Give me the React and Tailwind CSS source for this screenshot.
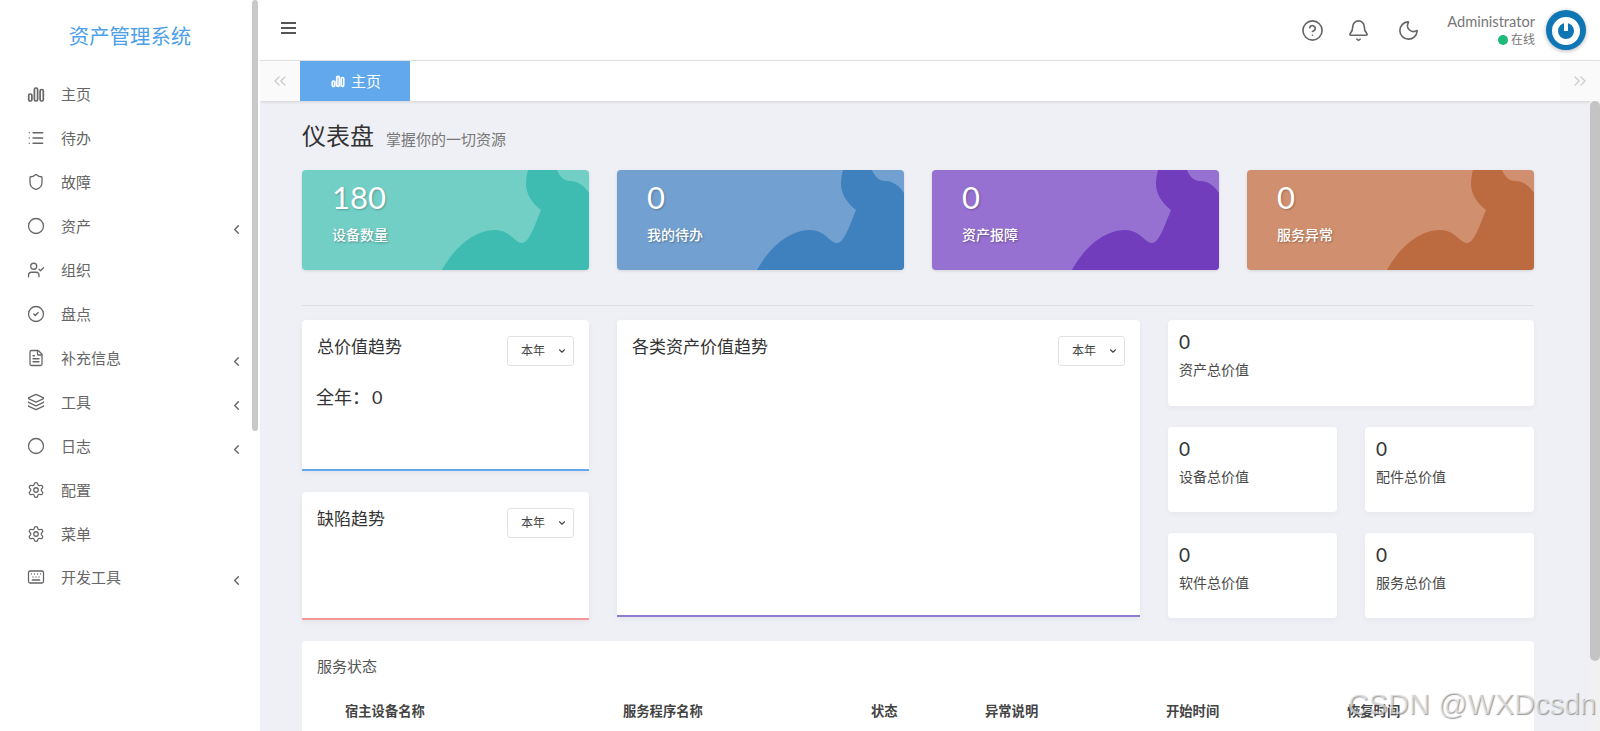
import React from "react";
import {
  List,
  Shield,
  Circle,
  UserCheck,
  CircleCheck,
  FileText,
  Layers,
  Settings,
  Keyboard,
  ChevronLeft,
  ChevronDown,
  ChevronsLeft,
  ChevronsRight,
  CircleHelp,
  Bell,
  Moon,
} from "lucide-react";

const BarsIcon = ({ className, strokeWidth = 1.5 }) => (
  <svg viewBox="-1 -1 18 18" fill="none" stroke="currentColor" strokeWidth={strokeWidth} className={className}>
    <rect x="0.7" y="8" width="3.2" height="7" rx="1.4" />
    <rect x="6.4" y="2" width="3.2" height="13" rx="1.4" />
    <rect x="12.1" y="3.5" width="3.2" height="11.5" rx="1.4" />
  </svg>
);

const menu = [
  { label: "主页", icon: BarsIcon },
  { label: "待办", icon: List },
  { label: "故障", icon: Shield },
  { label: "资产", icon: Circle, more: true },
  { label: "组织", icon: UserCheck },
  { label: "盘点", icon: CircleCheck },
  { label: "补充信息", icon: FileText, more: true },
  { label: "工具", icon: Layers, more: true },
  { label: "日志", icon: Circle, more: true },
  { label: "配置", icon: Settings },
  { label: "菜单", icon: Settings },
  { label: "开发工具", icon: Keyboard, more: true },
];

const statCards = [
  { value: "180", label: "设备数量", bg: "bg-[#72cfc6]", blob: "text-[#3fbcb1]" },
  { value: "0", label: "我的待办", bg: "bg-[#72a1d1]", blob: "text-[#3f81bf]" },
  { value: "0", label: "资产报障", bg: "bg-[#9671d1]", blob: "text-[#723dbd]" },
  { value: "0", label: "服务异常", bg: "bg-[#d0906f]", blob: "text-[#bc6a40]" },
];

const columns = [
  { label: "宿主设备名称", width: "w-[278px]" },
  { label: "服务程序名称", width: "w-[248px]" },
  { label: "状态", width: "w-[114px]" },
  { label: "异常说明", width: "w-[181px]" },
  { label: "开始时间", width: "w-[181px]" },
  { label: "恢复时间", width: "" },
];

const Blob = ({ className }) => (
  <svg viewBox="0 0 287 100" preserveAspectRatio="none" className={`absolute inset-0 h-full w-full ${className}`}>
    <path
      fill="currentColor"
      d="M140 100C152 78 172 60 193 60C208 60 213 73 220 73C227 73 232 57 239 40C230 33 224 24 224 14C224 8 225 4 226 0H255C258 7 262 11 268 11C277 11 283 17 287 23V100Z"
    />
  </svg>
);

const YearSelect = () => (
  <div className="flex h-[30px] w-[67px] items-center justify-between rounded-[3px] border border-[#dfe3e6] pl-[13px] pr-[6px] text-[12px] text-[#444]">
    <span>本年</span>
    <ChevronDown className="h-[10px] w-[10px] text-[#444]" strokeWidth={2.6} />
  </div>
);

const TrendCard = ({ title, className, children }) => (
  <div className={`flex items-start justify-between rounded-t-[4px] bg-white pl-[15px] pr-[15px] pt-[16px] shadow-[0_2px_6px_rgba(0,0,0,0.05)] ${className}`}>
    <div>
      <div className="text-[17px] leading-[22px] text-[#333]">{title}</div>
      {children}
    </div>
    <YearSelect />
  </div>
);

const ValueCard = ({ label, className }) => (
  <div className={`rounded-[4px] bg-white pl-[11px] pt-[10px] shadow-[0_2px_6px_rgba(0,0,0,0.04)] ${className}`}>
    <div className="text-[19px] leading-[24px] text-[#333]">0</div>
    <div className="mt-[6px] text-[14px] leading-[20px] text-[#484848]">{label}</div>
  </div>
);

export default function App() {
  return (
    <div className="relative flex h-screen overflow-hidden bg-[#eff0f5] font-['Lato','Noto_Sans_CJK_SC',sans-serif]">
      {/* Sidebar */}
      <aside className="relative h-full w-[260px] shrink-0 bg-white">
        <div className="pt-[22px] text-center text-[20.4px] leading-[28px] text-[#4d9fe8]">资产管理系统</div>
        <nav className="mt-[22px]">
          {menu.map((item) => (
            <div key={item.label} className="flex h-[44px] items-center pl-[27px] text-[#666] last:-mt-[1px]">
              <item.icon className="h-[18px] w-[18px] shrink-0" strokeWidth={1.7} />
              <span className="ml-[16px] text-[15px]">{item.label}</span>
              {item.more && <ChevronLeft className="ml-auto mr-[16px] mt-[6px] h-[15px] w-[15px]" strokeWidth={2.2} />}
            </div>
          ))}
        </nav>
        <div className="absolute right-[2px] top-0 h-[431px] w-[6px] rounded-[3px] bg-[#c9c9c9]" />
      </aside>

      <main className="flex min-w-0 flex-1 flex-col">
        {/* Header */}
        <header className="flex h-[61px] shrink-0 items-center border-b border-[#e4e4e4] bg-white pl-[21px] pr-[14px]">
          <div className="mb-[4px] flex w-[15px] flex-col gap-[2.5px]">
            <span className="h-[2.5px] bg-[#555]" />
            <span className="h-[2.5px] bg-[#555]" />
            <span className="h-[2.5px] bg-[#555]" />
          </div>
          <div className="ml-auto flex items-center text-[#666]">
            <CircleHelp className="h-[23px] w-[23px]" strokeWidth={1.7} />
            <Bell className="ml-[23px] h-[23px] w-[23px]" strokeWidth={1.7} />
            <Moon className="ml-[27px] h-[23px] w-[23px]" strokeWidth={1.7} />
            <div className="ml-[27px] flex flex-col items-end">
              <span className="text-[14.6px] leading-[19px] text-[#777]">Administrator</span>
              <span className="flex items-center text-[12px] leading-[17px] text-[#777]">
                <span className="mr-[3px] h-[10px] w-[10px] rounded-full bg-[#1fba7a]" />
                在线
              </span>
            </div>
            <div className="ml-[11px] h-[40px] w-[40px] rounded-full bg-[#0e76b5] shadow-[0_1px_4px_rgba(0,0,0,0.3)]">
              <svg viewBox="0 0 40 40" className="h-[40px] w-[40px] blur-[0.6px]" fill="none">
                <circle cx="20" cy="21" r="11" stroke="#fff" strokeWidth="6" />
                <path d="M20 8v13" stroke="#fff" strokeWidth="4" />
              </svg>
            </div>
          </div>
        </header>

        {/* Tabs */}
        <div className="flex h-[40px] shrink-0 bg-white shadow-[0_1px_3px_rgba(0,0,0,0.12)]">
          <div className="flex w-[40px] items-center justify-center bg-[#fafafa] text-[#c8c8c8]">
            <ChevronsLeft className="h-[20px] w-[20px]" strokeWidth={1.5} />
          </div>
          <div className="flex w-[110px] items-center justify-center gap-[6px] bg-[#62a8ec] pl-[2px] text-[15px] text-white">
            <BarsIcon className="h-[14px] w-[14px]" strokeWidth={2.2} />
            主页
          </div>
          <div className="ml-auto flex w-[40px] items-center justify-center bg-[#fafafa] text-[#c8c8c8]">
            <ChevronsRight className="h-[20px] w-[20px]" strokeWidth={1.5} />
          </div>
        </div>

        {/* Content */}
        <div className="min-h-0 flex-1 overflow-hidden pl-[42px] pr-[66px]">
          <div className="flex h-[69px] items-baseline pt-[18px]">
            <h1 className="text-[24px] font-normal leading-[34px] text-[#333]">仪表盘</h1>
            <span className="ml-[12px] text-[15px] text-[#777]">掌握你的一切资源</span>
          </div>

          <div className="grid grid-cols-4 gap-x-[28px]">
            {statCards.map((card) => (
              <div key={card.label} className={`relative h-[100px] overflow-hidden rounded-[4px] text-white shadow-[0_1px_3px_rgba(0,0,0,0.12)] ${card.bg}`}>
                <Blob className={card.blob} />
                <div className="relative pl-[30px]">
                  <div className="pt-[7px] text-[31px] leading-[40px] [text-shadow:1px_1px_2px_rgba(0,0,0,0.25)]">{card.value}</div>
                  <div className="mt-[8px] text-[14px] font-medium leading-[20px] [text-shadow:1px_1px_2px_rgba(0,0,0,0.3)]">{card.label}</div>
                </div>
              </div>
            ))}
          </div>

          <div className="mt-[35px] h-px bg-[#dcdde2]" />

          <div className="mt-[14px] grid grid-cols-[287px_523px_366px] gap-x-[28px]">
            <div className="flex flex-col gap-[21px]">
              <TrendCard title="总价值趋势" className="h-[151px] border-b-2 border-[#62a8ec]">
                <div className="-ml-[1px] mt-[26px] text-[18px] leading-[26px] text-[#333]">
                  全年：<span className="ml-[2px]">0</span>
                </div>
              </TrendCard>
              <TrendCard title="缺陷趋势" className="h-[128px] border-b-2 border-[#f59a9a]" />
            </div>

            <TrendCard title="各类资产价值趋势" className="h-[297px] border-b-2 border-[#8f7cd0] pr-[14px]" />

            <div className="grid grid-cols-2 content-start gap-x-[28px] gap-y-[21px]">
              <ValueCard label="资产总价值" className="col-span-2 h-[86px]" />
              <ValueCard label="设备总价值" className="h-[85px]" />
              <ValueCard label="配件总价值" className="h-[85px]" />
              <ValueCard label="软件总价值" className="h-[85px]" />
              <ValueCard label="服务总价值" className="h-[85px]" />
            </div>
          </div>

          <div className="mt-[21px] h-[200px] rounded-[4px] bg-white pl-[15px] pt-[14px]">
            <div className="text-[15px] leading-[22px] text-[#555]">服务状态</div>
            <div className="mt-[23px] flex pl-[28px] text-[13.3px] font-bold leading-[22px] text-[#444]">
              {columns.map((col) => (
                <div key={col.label} className={col.width}>{col.label}</div>
              ))}
            </div>
          </div>
        </div>
      </main>

      {/* Page scrollbar */}
      <div className="absolute bottom-0 right-0 top-[101px] w-[10px] bg-[#f1f1f1]">
        <div className="h-[560px] rounded-[5px] bg-[#c4c4c4]" />
      </div>

      {/* Watermark */}
      <div className="absolute bottom-[11px] right-[4px] font-['Liberation_Sans',sans-serif] text-[29px] leading-[32px] text-[#ffffff90] [text-shadow:1px_1px_1px_rgba(90,90,90,0.6)]">
        CSDN @WXDcsdn
      </div>
    </div>
  );
}
